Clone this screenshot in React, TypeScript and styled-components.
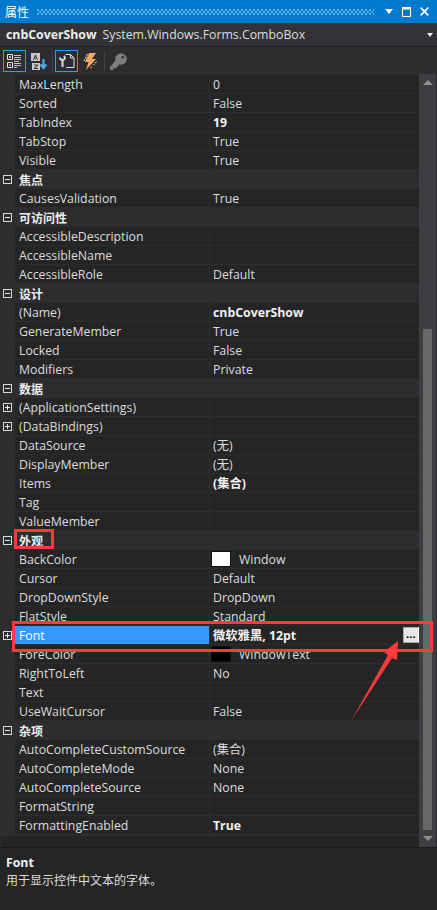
import React from 'react';
import styled, {createGlobalStyle} from 'styled-components';

const Global = createGlobalStyle`
  html, body { margin: 0; padding: 0; background: #2d2d30; }
  * { box-sizing: border-box; }
`;

const Panel = styled.div`
  position: relative;
  width: 437px;
  height: 910px;
  overflow: hidden;
  background: #2d2d30;
  color: #dcdcdc;
  font-family: "Open Sans", "Noto Sans CJK SC", sans-serif;
  font-size: 12.3px;
  display: flex;
  flex-direction: column;
`;
const TitleBar = styled.div`
  height: 23px;
  background: #007acc;
  color: #fff;
  display: flex;
  align-items: center;
  padding: 0 8px 0 5px;
  font-size: 12px;
  font-family: "Noto Sans CJK SC", sans-serif;
  flex-shrink: 0;
`;
const Dots = styled.div`
  flex: 1;
  height: 6px;
  margin: 0 11px 0 8px;
  background-image:
    radial-gradient(circle at 1px 1px, #5aaee4 0.8px, transparent 1px),
    radial-gradient(circle at 3px 3px, #5aaee4 0.8px, transparent 1px);
  background-size: 4px 4px;
`;
const TitleIcons = styled.div`
  display: flex;
  align-items: center;
  gap: 9px;
`;
const ObjectBar = styled.div`
  height: 24px;
  display: flex;
  align-items: center;
  padding: 0 4px 0 6px;
  background: #333337;
  border-bottom: 1px solid #222;
  flex-shrink: 0;
  white-space: nowrap;
`;
const ObjectName = styled.b`
  font-weight: 700;
  margin-right: 6px;
  color: #eee;
`;
const ObjectType = styled.span`
  flex: 1;
  color: #ddd;
`;
const ToolBar = styled.div`
  height: 27px;
  display: flex;
  align-items: center;
  gap: 1px;
  padding: 1px 3px 0;
  flex-shrink: 0;
`;
const ToolButton = styled.div<{$on?: boolean}>`
  width: 23px;
  height: 22px;
  display: flex;
  align-items: center;
  justify-content: center;
  border: 1px solid ${p => (p.$on ? '#3399ff' : 'transparent')};
`;
const ToolSep = styled.div`
  width: 1px;
  height: 20px;
  margin: 0 1px;
  background: #3f3f46;
`;
const Body = styled.div`
  height: 773px;
  display: flex;
  flex-shrink: 0;
`;
const Grid = styled.div`
  flex: 1;
  min-width: 0;
  padding-top: 1px;
  display: flex;
  flex-direction: column;
`;
const Row = styled.div`
  height: 19px;
  display: grid;
  grid-template-columns: 15px 195px 1fr;
`;
const Gutter = styled.div`
  height: 19px;
  display: flex;
  align-items: center;
  justify-content: center;
`;
const Box = styled.div`
  position: relative;
  width: 9px;
  height: 9px;
  border: 1px solid #d8d8d8;
  &::before {
    content: '';
    position: absolute;
    left: 1px;
    top: 3px;
    width: 5px;
    height: 1px;
    background: #e8e8e8;
  }
`;
const PlusBox = styled(Box)`
  &::after {
    content: '';
    position: absolute;
    left: 3px;
    top: 1px;
    width: 1px;
    height: 5px;
    background: #e8e8e8;
  }
`;
const Name = styled.div<{$selected?: boolean}>`
  padding-left: 4px;
  line-height: 20px;
  background: ${p => (p.$selected ? '#3399ff' : '#252526')};
  color: ${p => (p.$selected ? '#fff' : '#dcdcdc')};
  border-bottom: 1px solid #2d2d30;
  border-right: 1px solid #2d2d30;
  overflow: hidden;
  white-space: nowrap;
`;
const Value = styled.div<{$bold?: boolean}>`
  position: relative;
  height: 19px;
  padding-left: 3px;
  line-height: 20px;
  background: #252526;
  border-bottom: 1px solid #2d2d30;
  font-weight: ${p => (p.$bold ? 700 : 400)};
  color: ${p => (p.$bold ? '#f1f1f1' : '#dcdcdc')};
  white-space: nowrap;
  display: flex;
`;
const Swatch = styled.span<{$color: string}>`
  width: 20px;
  height: 16px;
  margin: 1px 8px 0 -2px;
  background: ${p => p.$color};
  border: 1px solid #111;
  flex-shrink: 0;
`;
const CategoryRow = styled.div`
  height: 19px;
  display: grid;
  grid-template-columns: 15px 1fr;
`;
const CategoryName = styled.div`
  padding-left: 4px;
  font-family: "Noto Sans CJK SC", sans-serif;
  font-size: 12px;
  font-weight: 700;
  color: #eee;
  line-height: 20px;
`;
const Ellipsis = styled.div`
  position: absolute;
  right: 0;
  top: 1px;
  width: 16px;
  height: 16px;
  background: #e6e6e6;
  border: 1px solid #a8a8a8;
  border-right-color: #fff;
  color: #000;
  font: 700 11px/13px "Liberation Sans", sans-serif;
  letter-spacing: .2px;
  text-align: center;
`;
const GridFooter = styled.div`
  height: 12px;
  margin-left: 1px;
  background: #252526;
  border-top: 1px solid #2d2d30;
`;
const ScrollBar = styled.div`
  position: relative;
  width: 18px;
  background: #3e3e42;
  border-right: 1px solid #2d2d30;
`;
const Arrow = styled.div<{$down?: boolean}>`
  position: absolute;
  left: 4px;
  ${p => (p.$down ? 'bottom: 6px;' : 'top: 6px;')}
  width: 0;
  height: 0;
  border-left: 5px solid transparent;
  border-right: 5px solid transparent;
  ${p => (p.$down ? 'border-top' : 'border-bottom')}: 5px solid #8f8f8f;
`;
const Thumb = styled.div`
  position: absolute;
  left: 4px;
  top: 255px;
  bottom: 17px;
  width: 9px;
  background: #686868;
`;
const Description = styled.div`
  flex: 1;
  border-top: 1px solid #1b1b1c;
  background: #252526;
  padding: 6px 6px;
  line-height: 18px;
`;
const DescTitle = styled.div`
  font-weight: 700;
  color: #f1f1f1;
`;
const DescText = styled.div`
  font-size: 12px;
`;
const Frame = styled.div`
  position: absolute;
  border: 3px solid #fb3a3c;
  pointer-events: none;
`;
const CategoryFrame = styled(Frame)`
  left: 14px;
  top: 529px;
  width: 40px;
  height: 20px;
`;
const FontFrame = styled(Frame)`
  left: 12px;
  top: 621px;
  width: 421px;
  height: 31px;
`;
const ArrowMark = styled.svg`
  position: absolute;
  left: 340px;
  top: 630px;
`;

type Item = {n: string; v?: string; bold?: boolean; swatch?: string; plus?: boolean; selected?: boolean; more?: boolean};
type Section = {title?: string; items: Item[]};

const sections: Section[] = [
  {items: [
    {n: 'MaxLength', v: '0'},
    {n: 'Sorted', v: 'False'},
    {n: 'TabIndex', v: '19', bold: true},
    {n: 'TabStop', v: 'True'},
    {n: 'Visible', v: 'True'},
  ]},
  {title: '焦点', items: [{n: 'CausesValidation', v: 'True'}]},
  {title: '可访问性', items: [
    {n: 'AccessibleDescription'},
    {n: 'AccessibleName'},
    {n: 'AccessibleRole', v: 'Default'},
  ]},
  {title: '设计', items: [
    {n: '(Name)', v: 'cnbCoverShow', bold: true},
    {n: 'GenerateMember', v: 'True'},
    {n: 'Locked', v: 'False'},
    {n: 'Modifiers', v: 'Private'},
  ]},
  {title: '数据', items: [
    {n: '(ApplicationSettings)', plus: true},
    {n: '(DataBindings)', plus: true},
    {n: 'DataSource', v: '(无)'},
    {n: 'DisplayMember', v: '(无)'},
    {n: 'Items', v: '(集合)', bold: true},
    {n: 'Tag'},
    {n: 'ValueMember'},
  ]},
  {title: '外观', items: [
    {n: 'BackColor', v: 'Window', swatch: '#fff'},
    {n: 'Cursor', v: 'Default'},
    {n: 'DropDownStyle', v: 'DropDown'},
    {n: 'FlatStyle', v: 'Standard'},
    {n: 'Font', v: '微软雅黑, 12pt', bold: true, plus: true, selected: true, more: true},
    {n: 'ForeColor', v: 'WindowText', swatch: '#000'},
    {n: 'RightToLeft', v: 'No'},
    {n: 'Text'},
    {n: 'UseWaitCursor', v: 'False'},
  ]},
  {title: '杂项', items: [
    {n: 'AutoCompleteCustomSource', v: '(集合)'},
    {n: 'AutoCompleteMode', v: 'None'},
    {n: 'AutoCompleteSource', v: 'None'},
    {n: 'FormatString'},
    {n: 'FormattingEnabled', v: 'True', bold: true},
  ]},
];

function App() {
  return (
    <Panel>
      <Global/>
      <TitleBar>
        属性
        <Dots/>
        <TitleIcons>
          <svg width="8" height="5" viewBox="0 0 8 5"><path d="M0 0h8L4 5z" fill="#fff"/></svg>
          <svg width="9" height="10" viewBox="0 0 9 10"><path d="M.5 1h8v8.500h-8z" fill="none" stroke="#fff"/><path d="M0 0h9v2.500H0z" fill="#fff"/></svg>
          <svg width="9" height="9" viewBox="0 0 9 9"><path d="M.7 .7l7.600 7.600M8.300 .7L.7 8.300" stroke="#fff" strokeWidth="1.700"/></svg>
        </TitleIcons>
      </TitleBar>
      <ObjectBar>
        <ObjectName>cnbCoverShow</ObjectName>
        <ObjectType>System.Windows.Forms.ComboBox</ObjectType>
        <svg width="6" height="4" viewBox="0 0 6 4"><path d="M0 0h6L3 4z" fill="#eee"/></svg>
      </ObjectBar>
      <ToolBar>
        <ToolButton $on>
          <svg width="15" height="14" viewBox="0 0 15 14" fill="none">
            <path d="M.5 .5h5v5h-5zM.5 8.500h5v5h-5z" stroke="#e6e6e6"/>
            <path d="M2 3h2M3 2v2M2 11h2" stroke="#e6e6e6"/>
            <path d="M7 1.500h7M7 3.500h7M7 5.500h7M7 7.500h5M7 9.500h7M7 11.500h7M7 13.500h3" stroke="#c4c4c4"/>
          </svg>
        </ToolButton>
        <ToolButton>
          <svg width="16" height="17" viewBox="0 0 16 17">
            <path d="M0 0h9v8H0zM1 10h8v7H1z" fill="#c8c8c8"/>
            <path d="M2.500 7l2-5 2 5M3.300 5h2.400M3 12h4l-4 3.500h4" stroke="#2d2d30" fill="none"/>
            <path d="M12.500 6v8.500M9.500 11.500l3 3.500 3-3.500" stroke="#4aa8e8" strokeWidth="2.200" fill="none"/>
          </svg>
        </ToolButton>
        <ToolSep/>
        <ToolButton $on>
          <svg width="16" height="16" viewBox="0 0 16 16" fill="none" stroke="#e0e0e0">
            <path d="M6.500 1.500h5l3.500 3.500v9.500H7M11.500 1.500V5H15"/>
            <path d="M1 4.500a2.500 2.500 0 0 0 4.500 1.500A2.500 2.500 0 0 0 5 3M3.500 7v7" strokeWidth="2"/>
          </svg>
        </ToolButton>
        <ToolButton>
          <svg width="15" height="17" viewBox="0 0 15 17">
            <path d="M6 0h7L9 6h4L3 17l2.500-8H2z" fill="#eeaa62"/>
            <path d="M4.500 1L1 8M13.500 8.500l-3 3.500M9 13.500l-2 2" stroke="#eee" strokeDasharray="2 1" fill="none"/>
          </svg>
        </ToolButton>
        <ToolSep/>
        <ToolButton>
          <svg width="17" height="17" viewBox="0 0 17 17" fill="#7d7d7d">
            <circle cx="11" cy="6" r="5.800"/>
            <path d="M7 6l4 4-2 1v2H7v2H4l-1 2H0v-3z"/>
            <circle cx="12.800" cy="4.200" r="1.300" fill="#2d2d30"/>
          </svg>
        </ToolButton>
      </ToolBar>
      <Body>
        <Grid>
          {sections.map((section, i) =>
            <div key={i}>
              {section.title &&
                <CategoryRow>
                  <Gutter><Box/></Gutter>
                  <CategoryName>{section.title}</CategoryName>
                </CategoryRow>
              }
              {section.items.map(item =>
                <Row key={item.n}>
                  <Gutter>{item.plus && <PlusBox/>}</Gutter>
                  <Name $selected={item.selected}>{item.n}</Name>
                  <Value $bold={item.bold}>
                    {item.swatch && <Swatch $color={item.swatch}/>}
                    {item.v}
                    {item.more && <Ellipsis>...</Ellipsis>}
                  </Value>
                </Row>
              )}
            </div>
          )}
          <GridFooter/>
        </Grid>
        <ScrollBar>
          <Arrow/>
          <Thumb/>
          <Arrow $down/>
        </ScrollBar>
      </Body>
      <Description>
        <DescTitle>Font</DescTitle>
        <DescText>用于显示控件中文本的字体。</DescText>
      </Description>
      <CategoryFrame/>
      <FontFrame/>
      <ArrowMark width="60" height="95" viewBox="0 0 60 95">
        <path d="M58 11L44 22l4 3-37 66 41-63 5 2z" fill="#fb3a3c"/>
      </ArrowMark>
    </Panel>
  );
}

export default App;
